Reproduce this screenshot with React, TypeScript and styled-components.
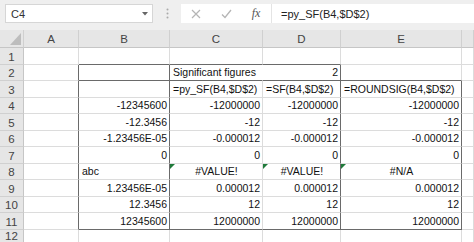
import React from "react";
import styled, { createGlobalStyle } from "styled-components";

const Global = createGlobalStyle`
  html, body { margin: 0; padding: 0; background: #ffffff; overflow: hidden; }
  body { font-family: "Liberation Sans", Arial, sans-serif; }
`;

const Page = styled.div`
  width: 474px;
  height: 242px;
  overflow: hidden;
  background: #ffffff;
`;

const FormulaBar = styled.div`
  height: 30px;
  box-sizing: border-box;
  background: #efefef;
  display: flex;
  align-items: flex-start;
  padding: 4px 0 0 5px;
`;

const NameBox = styled.div`
  width: 148px;
  height: 19px;
  box-sizing: border-box;
  background: #ffffff;
  border: 1px solid #d6d6d6;
  display: flex;
  align-items: center;
  justify-content: space-between;
  padding: 0 4px 0 5px;
  font-size: 11px;
  color: #333;
`;

const Grip = styled.div`
  width: 28px;
  height: 19px;
  display: flex;
  align-items: center;
  justify-content: center;
`;

const FxArea = styled.div`
  flex: 1;
  height: 19px;
  background: #ffffff;
  display: flex;
  align-items: center;
`;

const IconSlot = styled.div<{ $w: number }>`
  width: ${(p) => p.$w}px;
  height: 19px;
  display: flex;
  align-items: center;
  justify-content: center;
`;

const FxLabel = styled.div`
  width: 30px;
  font-family: "Liberation Serif", "Times New Roman", serif;
  font-style: italic;
  font-size: 12px;
  color: #555;
  text-align: center;
`;

const FormulaInput = styled.div`
  flex: 1;
  height: 19px;
  box-sizing: border-box;
  border-left: 1px solid #e4e4e4;
  display: flex;
  align-items: center;
  padding-left: 9px;
  font-size: 11px;
  color: #222;
  white-space: nowrap;
`;

const Sheet = styled.div`
  display: grid;
  grid-template-columns: 24px 55px 91px 93px 78px 121px 1fr;
  grid-template-rows: 18px 17px 16px 17px 16px 17px 16px 17px 16px 17px 16px 17px 14px;
`;

const HeadCell = styled.div<{ $corner?: boolean }>`
  background: #e6e6e6;
  box-sizing: border-box;
  border-right: 1px solid #d0d0d0;
  border-bottom: 1px solid #c6c6c6;
  display: flex;
  align-items: center;
  justify-content: center;
  font-size: 11.5px;
  color: #444;
  position: relative;
`;

const CornerTri = styled.div`
  position: absolute;
  right: 2px;
  bottom: 2px;
  width: 0;
  height: 0;
  border-left: 11px solid transparent;
  border-bottom: 12px solid #bdbdbd;
`;

const RowHead = styled.div<{ $dark?: boolean }>`
  background: #e6e6e6;
  box-sizing: border-box;
  border-right: 1px solid #c6c6c6;
  border-bottom: 1px solid #d0d0d0;
  display: flex;
  align-items: flex-end;
  justify-content: center;
  padding-bottom: 1px;
  font-size: 11.5px;
  color: #444;
`;

type Edge = "dark" | "grid" | "none";

const edgeColor = (e: Edge) =>
  e === "dark" ? "#6a6a6a" : e === "grid" ? "#dcdcdc" : "transparent";

const Cell = styled.div<{ $r: Edge; $b: Edge; $align: "left" | "right" | "center" }>`
  position: relative;
  box-sizing: border-box;
  border-right: 1px solid ${(p) => edgeColor(p.$r)};
  border-bottom: 1px solid ${(p) => edgeColor(p.$b)};
  display: flex;
  align-items: flex-end;
  justify-content: ${(p) =>
    p.$align === "left" ? "flex-start" : p.$align === "center" ? "center" : "flex-end"};
  padding: 0 2px 1px 3px;
  font-size: 10.5px;
  line-height: 14px;
  color: #111;
  white-space: nowrap;
  overflow: visible;
`;

const ErrorTri = styled.div`
  position: absolute;
  left: 0;
  top: 0;
  width: 0;
  height: 0;
  border-top: 5px solid #1f7a3a;
  border-right: 5px solid transparent;
`;

type CellDef = { t?: string; a?: "left" | "right" | "center"; err?: boolean };

const num = (t: string): CellDef => ({ t, a: "right" });

const data: CellDef[][] = [
  [{}, {}, {}, {}, {}],
  [{}, {}, { t: "Significant figures", a: "left" }, num("2"), {}],
  [
    {},
    {},
    { t: "=py_SF(B4,$D$2)", a: "left" },
    { t: "=SF(B4,$D$2)", a: "left" },
    { t: "=ROUNDSIG(B4,$D$2)", a: "left" },
  ],
  [{}, num("-12345600"), num("-12000000"), num("-12000000"), num("-12000000")],
  [{}, num("-12.3456"), num("-12"), num("-12"), num("-12")],
  [{}, num("-1.23456E-05"), num("-0.000012"), num("-0.000012"), num("-0.000012")],
  [{}, num("0"), num("0"), num("0"), num("0")],
  [
    {},
    { t: "abc", a: "left" },
    { t: "#VALUE!", a: "center", err: true },
    { t: "#VALUE!", a: "center", err: true },
    { t: "#N/A", a: "center", err: true },
  ],
  [{}, num("1.23456E-05"), num("0.000012"), num("0.000012"), num("0.000012")],
  [{}, num("12.3456"), num("12"), num("12"), num("12")],
  [{}, num("12345600"), num("12000000"), num("12000000"), num("12000000")],
  [{}, {}, {}, {}, {}],
];

// borders: col index 0..5 => A..F
function edges(row: number, col: number): { r: Edge; b: Edge } {
  let r: Edge = "grid";
  let b: Edge = "grid";
  const inBox = row >= 2 && row <= 11;
  if (row === 1 && col >= 1 && col <= 3) b = "dark";
  if (row === 2 && col >= 1 && col <= 4) b = "dark";
  if (row === 11 && col >= 1 && col <= 4) b = "dark";
  if (inBox) {
    if (col === 0 || col === 1 || col === 3) r = "dark";
    if (col === 4 && row >= 3) r = "dark";
  }
  if (row === 2 && col === 2) r = "none";
  return { r, b };
}

const XIcon = () => (
  <svg width="10" height="10" viewBox="0 0 10 10">
    <path d="M1 1 L9 9 M9 1 L1 9" stroke="#b5b5b5" strokeWidth="1.2" fill="none" />
  </svg>
);

const CheckIcon = () => (
  <svg width="11" height="10" viewBox="0 0 11 10">
    <path d="M1 5.5 L4 8.5 L10 1" stroke="#b5b5b5" strokeWidth="1.3" fill="none" />
  </svg>
);

const DropArrow = () => (
  <svg width="6" height="4" viewBox="0 0 6 4">
    <path d="M0 0 L6 0 L3 3.5 Z" fill="#666" />
  </svg>
);

const Dots = () => (
  <svg width="3" height="11" viewBox="0 0 3 11">
    <circle cx="1.5" cy="1.5" r="1" fill="#aaa" />
    <circle cx="1.5" cy="5.5" r="1" fill="#aaa" />
    <circle cx="1.5" cy="9.5" r="1" fill="#aaa" />
  </svg>
);

const cols = ["A", "B", "C", "D", "E", ""];

export default function App() {
  return (
    <Page>
      <Global />
      <FormulaBar>
        <NameBox>
          <span>C4</span>
          <DropArrow />
        </NameBox>
        <Grip>
          <Dots />
        </Grip>
        <FxArea>
          <IconSlot $w={30}>
            <XIcon />
          </IconSlot>
          <IconSlot $w={30}>
            <CheckIcon />
          </IconSlot>
          <FxLabel>fx</FxLabel>
          <FormulaInput>=py_SF(B4,$D$2)</FormulaInput>
        </FxArea>
      </FormulaBar>
      <Sheet>
        <HeadCell>
          <CornerTri />
        </HeadCell>
        {cols.map((c, i) => (
          <HeadCell key={i}>{c}</HeadCell>
        ))}
        {data.map((row, ri) => {
          const rowNum = ri + 1;
          return (
            <React.Fragment key={ri}>
              <RowHead>{rowNum}</RowHead>
              {[0, 1, 2, 3, 4, 5].map((ci) => {
                const def: CellDef = ci < 5 ? row[ci] : {};
                const e = edges(rowNum, ci);
                return (
                  <Cell key={ci} $r={e.r} $b={e.b} $align={def.a ?? "left"}>
                    {def.err && <ErrorTri />}
                    {def.t}
                  </Cell>
                );
              })}
            </React.Fragment>
          );
        })}
      </Sheet>
    </Page>
  );
}
